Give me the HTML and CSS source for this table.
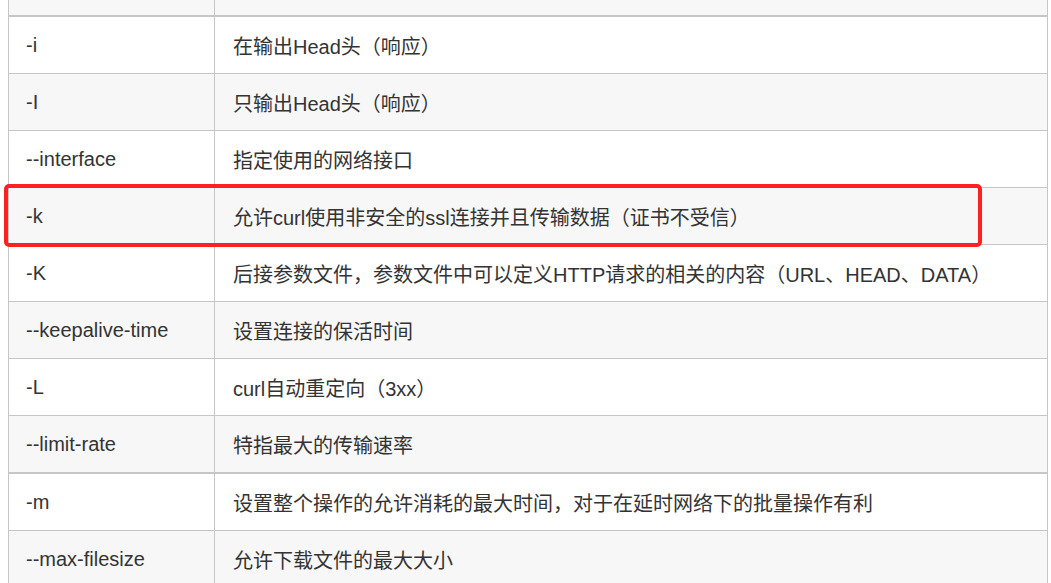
FILE: index.html
```html
<!DOCTYPE html>
<html lang="zh">
<head>
<meta charset="utf-8">
<title>curl options</title>
<link rel="stylesheet" href="styles.css">
</head>
<body>
<div class="page">
  <table class="opts">
    <colgroup><col class="c1"><col class="c2"></colgroup>
    <thead>
      <tr class="head"><th></th><th></th></tr>
    </thead>
    <tbody>
      <tr><td>-i</td><td>在输出Head头（响应）</td></tr>
      <tr class="alt"><td>-I</td><td>只输出Head头（响应）</td></tr>
      <tr><td>--interface</td><td>指定使用的网络接口</td></tr>
      <tr class="alt"><td>-k</td><td>允许curl使用非安全的ssl连接并且传输数据（证书不受信）</td></tr>
      <tr><td>-K</td><td>后接参数文件，参数文件中可以定义HTTP请求的相关的内容（URL、HEAD、DATA）</td></tr>
      <tr class="alt"><td>--keepalive-time</td><td>设置连接的保活时间</td></tr>
      <tr><td>-L</td><td>curl自动重定向（3xx）</td></tr>
      <tr class="alt"><td>--limit-rate</td><td>特指最大的传输速率</td></tr>
      <tr class="split"><td>-m</td><td>设置整个操作的允许消耗的最大时间，对于在延时网络下的批量操作有利</td></tr>
      <tr class="alt"><td>--max-filesize</td><td>允许下载文件的最大大小</td></tr>
    </tbody>
  </table>
  <div class="mark"></div>
</div>
</body>
</html>
```
FILE: styles.css
```css
html, body {
  margin: 0;
  padding: 0;
  background: #fff;
  overflow: hidden;
}
.page {
  position: relative;
  padding-left: 8px;
  height: 583px;
  overflow: hidden;
}
.opts {
  border-collapse: collapse;
  table-layout: fixed;
  width: 1040px;
  margin-top: -27px;
  font-family: "Liberation Sans", "Noto Sans CJK SC", sans-serif;
  font-size: 20px;
  color: #333;
}
.c1 { width: 206px; }
.opts th, .opts td {
  border: 1px solid #c6c6c6;
  padding: 0 17px;
  text-align: left;
  font-weight: normal;
  white-space: nowrap;
}
.opts td { height: 56px; }
.opts td + td { padding-left: 18px; }
.head th {
  height: 41px;
  background: #f7f7f7;
  border-bottom: 2px solid #c6c6c6;
}
.alt td { background: #f7f7f7; }
.split td { border-top: 2px solid #c6c6c6; }
.mark {
  position: absolute;
  left: 4px;
  top: 184px;
  width: 970px;
  height: 55px;
  border: 4px solid #ff2121;
  border-radius: 5px;
}
```
